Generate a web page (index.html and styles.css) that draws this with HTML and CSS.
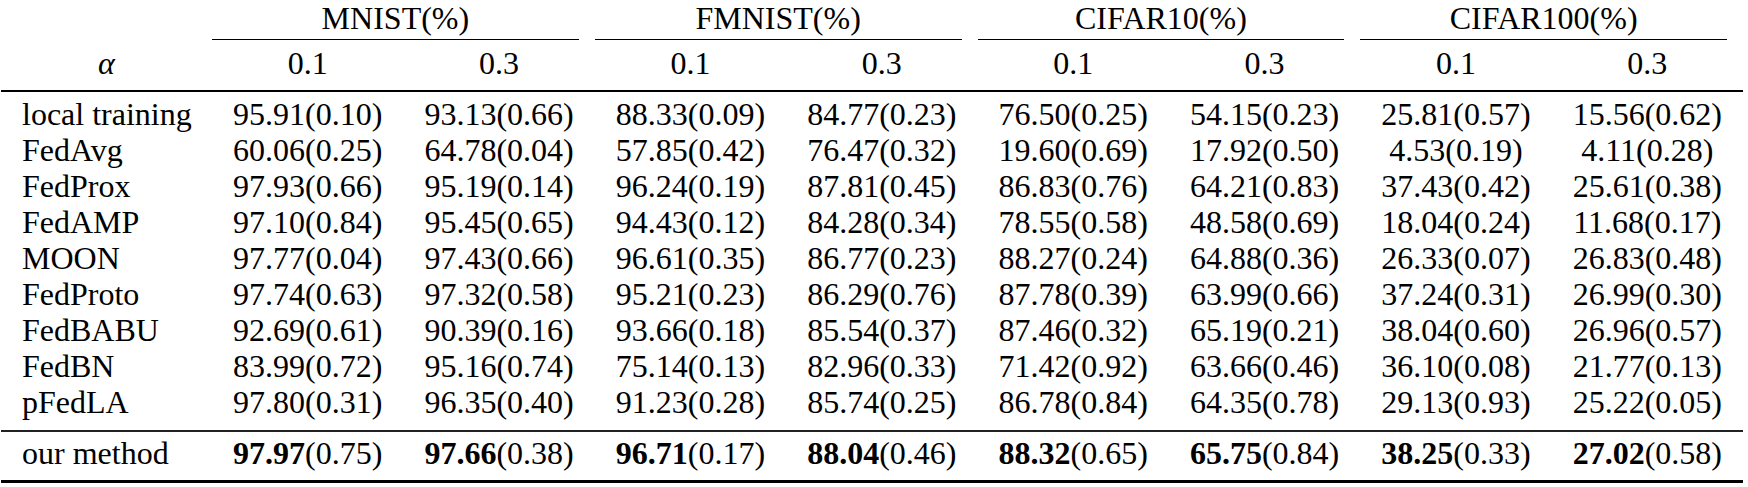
FILE: index.html
```html
<!DOCTYPE html>
<html lang="en">
<head>
    <meta charset="UTF-8">
    <title>Accuracy comparison</title>
    <link rel="stylesheet" href="styles.css">
</head>
<body>
    <table class="results">
        <colgroup>
            <col class="col-label">
            <col class="col-data"><col class="col-data">
            <col class="col-data"><col class="col-data">
            <col class="col-data"><col class="col-data">
            <col class="col-data"><col class="col-data">
        </colgroup>
        <thead>
            <tr class="group-row">
                <th></th>
                <th colspan="2"><div class="group-label">MNIST(%)</div></th>
                <th colspan="2"><div class="group-label">FMNIST(%)</div></th>
                <th colspan="2"><div class="group-label">CIFAR10(%)</div></th>
                <th colspan="2"><div class="group-label">CIFAR100(%)</div></th>
            </tr>
            <tr class="alpha-row">
                <th class="alpha"><span class="greek">α</span></th>
                <th>0.1</th><th>0.3</th>
                <th>0.1</th><th>0.3</th>
                <th>0.1</th><th>0.3</th>
                <th>0.1</th><th>0.3</th>
            </tr>
        </thead>
        <tbody class="baselines">
            <tr>
                <td class="name">local training</td>
                <td>95.91(0.10)</td><td>93.13(0.66)</td>
                <td>88.33(0.09)</td><td>84.77(0.23)</td>
                <td>76.50(0.25)</td><td>54.15(0.23)</td>
                <td>25.81(0.57)</td><td>15.56(0.62)</td>
            </tr>
            <tr>
                <td class="name">FedAvg</td>
                <td>60.06(0.25)</td><td>64.78(0.04)</td>
                <td>57.85(0.42)</td><td>76.47(0.32)</td>
                <td>19.60(0.69)</td><td>17.92(0.50)</td>
                <td>4.53(0.19)</td><td>4.11(0.28)</td>
            </tr>
            <tr>
                <td class="name">FedProx</td>
                <td>97.93(0.66)</td><td>95.19(0.14)</td>
                <td>96.24(0.19)</td><td>87.81(0.45)</td>
                <td>86.83(0.76)</td><td>64.21(0.83)</td>
                <td>37.43(0.42)</td><td>25.61(0.38)</td>
            </tr>
            <tr>
                <td class="name">FedAMP</td>
                <td>97.10(0.84)</td><td>95.45(0.65)</td>
                <td>94.43(0.12)</td><td>84.28(0.34)</td>
                <td>78.55(0.58)</td><td>48.58(0.69)</td>
                <td>18.04(0.24)</td><td>11.68(0.17)</td>
            </tr>
            <tr>
                <td class="name">MOON</td>
                <td>97.77(0.04)</td><td>97.43(0.66)</td>
                <td>96.61(0.35)</td><td>86.77(0.23)</td>
                <td>88.27(0.24)</td><td>64.88(0.36)</td>
                <td>26.33(0.07)</td><td>26.83(0.48)</td>
            </tr>
            <tr>
                <td class="name">FedProto</td>
                <td>97.74(0.63)</td><td>97.32(0.58)</td>
                <td>95.21(0.23)</td><td>86.29(0.76)</td>
                <td>87.78(0.39)</td><td>63.99(0.66)</td>
                <td>37.24(0.31)</td><td>26.99(0.30)</td>
            </tr>
            <tr>
                <td class="name">FedBABU</td>
                <td>92.69(0.61)</td><td>90.39(0.16)</td>
                <td>93.66(0.18)</td><td>85.54(0.37)</td>
                <td>87.46(0.32)</td><td>65.19(0.21)</td>
                <td>38.04(0.60)</td><td>26.96(0.57)</td>
            </tr>
            <tr>
                <td class="name">FedBN</td>
                <td>83.99(0.72)</td><td>95.16(0.74)</td>
                <td>75.14(0.13)</td><td>82.96(0.33)</td>
                <td>71.42(0.92)</td><td>63.66(0.46)</td>
                <td>36.10(0.08)</td><td>21.77(0.13)</td>
            </tr>
            <tr>
                <td class="name">pFedLA</td>
                <td>97.80(0.31)</td><td>96.35(0.40)</td>
                <td>91.23(0.28)</td><td>85.74(0.25)</td>
                <td>86.78(0.84)</td><td>64.35(0.78)</td>
                <td>29.13(0.93)</td><td>25.22(0.05)</td>
            </tr>
        </tbody>
        <tbody class="ours">
            <tr>
                <td class="name">our method</td>
                <td><span class="best">97.97</span>(0.75)</td><td><span class="best">97.66</span>(0.38)</td>
                <td><span class="best">96.71</span>(0.17)</td><td><span class="best">88.04</span>(0.46)</td>
                <td><span class="best">88.32</span>(0.65)</td><td><span class="best">65.75</span>(0.84)</td>
                <td><span class="best">38.25</span>(0.33)</td><td><span class="best">27.02</span>(0.58)</td>
            </tr>
        </tbody>
    </table>
</body>
</html>
```

FILE: styles.css
```css
* {
    font-family: "Liberation Serif", "Times New Roman", serif;
}
body {
    margin: 0;
    padding: 0;
    background-color: #fff;
    color: #000;
    font-size: 32px;
}
.results {
    margin-left: 1px;
    width: 1742px;
    table-layout: fixed;
    border-collapse: collapse;
}
.col-label {
    width: 211px;
}
.col-data {
    width: 191.375px;
}
th, td {
    padding: 0;
    font-weight: 400;
    text-align: center;
    white-space: nowrap;
}
.group-row th {
    vertical-align: top;
}
.group-label {
    margin-right: 16px;
    line-height: 36px;
    padding-bottom: 3px;
    border-bottom: 1px solid #000;
}
.alpha-row th {
    line-height: 46px;
    padding-bottom: 4px;
    border-bottom: 2px solid #000;
}
.greek {
    font-style: italic;
}
td {
    line-height: 36px;
}
td.name {
    text-align: left;
    padding-left: 21px;
}
.baselines tr:first-child td {
    padding-top: 4px;
}
.baselines tr:last-child td {
    padding-bottom: 10px;
    border-bottom: 2px solid #222;
}
.ours td {
    padding-top: 3px;
    padding-bottom: 9px;
    border-bottom: 3px solid #000;
}
.best {
    font-weight: 700;
}
```
